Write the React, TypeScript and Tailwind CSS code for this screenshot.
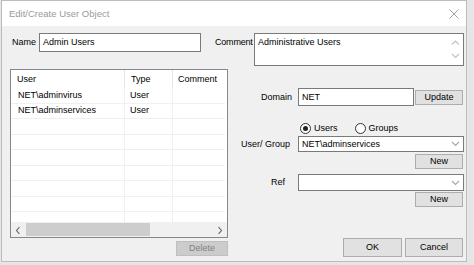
import type { ReactNode } from "react";

const FONT = "font-['Liberation_Sans',Arial,sans-serif]";

const ROWS = [
  { user: "NET\\adminvirus", type: "User", comment: "" },
  { user: "NET\\adminservices", type: "User", comment: "" },
  { user: "", type: "", comment: "" },
  { user: "", type: "", comment: "" },
  { user: "", type: "", comment: "" },
  { user: "", type: "", comment: "" },
  { user: "", type: "", comment: "" },
  { user: "", type: "", comment: "" },
  { user: "", type: "", comment: "" },
];

function Button({
  children,
  className = "",
  disabled = false,
}: {
  children: ReactNode;
  className?: string;
  disabled?: boolean;
}) {
  return (
    <div
      className={`flex items-center justify-center border ${
        disabled
          ? "border-[#bfbfbf] bg-[#cccccc] text-[#838383]"
          : "border-[#adadad] bg-[#e1e1e1] text-black"
      } ${className}`}
    >
      {children}
    </div>
  );
}

function Chevron({ dir = "down", color = "#a6a6a6" }: { dir?: "down" | "up" | "left" | "right"; color?: string }) {
  const d = {
    down: "M1 2 L4.5 5.5 L8 2",
    up: "M1 5.5 L4.5 2 L8 5.5",
    left: "M5.5 1 L2.5 4.5 L5.5 8",
    right: "M3.5 1 L6.5 4.5 L3.5 8",
  }[dir];
  return (
    <svg width="9" height="8" viewBox="0 0 9 8" fill="none">
      <path d={d} stroke={color} strokeWidth="1.1" />
    </svg>
  );
}

function Combo({ value, className = "" }: { value: string; className?: string }) {
  return (
    <div className={`flex items-center justify-between border border-[#7a7a7a] bg-white pl-[3px] pr-[3px] ${className}`}>
      <span>{value}</span>
      <Chevron />
    </div>
  );
}

function Radio({ checked, label }: { checked: boolean; label: string }) {
  return (
    <div className="flex items-center gap-[3px]">
      <span className="flex h-[11px] w-[11px] items-center justify-center rounded-full border border-[#333] bg-white">
        {checked ? <span className="h-[5px] w-[5px] rounded-full bg-[#222]" /> : null}
      </span>
      <span>{label}</span>
    </div>
  );
}

export default function App() {
  return (
    <div className={`h-[265px] w-[474px] overflow-hidden bg-[#e6e6e6] text-[9px] leading-none text-black ${FONT}`}>
      <div className="ml-[1px] flex h-[262px] w-[466px] flex-col border border-[#bcbcbc] bg-[#f0f0f0]">
        <div className="flex h-[25px] items-center justify-between bg-white pl-[7px] pr-[7px] text-[9.5px] text-[#9a9a9a]">
          <span>Edit/Create User Object</span>
          <svg width="10" height="10" viewBox="0 0 10 10">
            <path d="M0.5 0.5 L9.5 9.5 M9.5 0.5 L0.5 9.5" stroke="#999999" strokeWidth="0.9" />
          </svg>
        </div>

        <div className="flex flex-col pl-[8px] pr-[2px]">
          <div className="mt-[7px] flex items-start">
            <span className="ml-[2px] flex h-[19px] w-[27px] items-center">Name</span>
            <div className="flex h-[19px] w-[162px] items-center border border-[#7a7a7a] bg-white pl-[3px]">
              Admin Users
            </div>
            <span className="ml-[14px] flex h-[19px] w-[39px] items-center tracking-[-0.2px]">Comment</span>
            <div className="flex h-[33px] w-[210px] border border-[#7a7a7a] bg-white">
              <div className="flex-1 pl-[3px] pt-[4px]">Administrative Users</div>
              <div className="flex w-[16px] flex-col items-center justify-between py-[5px]">
                <Chevron dir="up" color="#c2c2c2" />
                <Chevron dir="down" color="#c2c2c2" />
              </div>
            </div>
          </div>

          <div className="mt-[3px] flex">
            <div className="flex w-[218px] flex-col">
              <div className="flex h-[169px] flex-col border border-[#828790] bg-white">
                <div className="flex h-[18px] shrink-0">
                  <div className="flex w-[114px] items-center border-r border-[#e5e5e5] pl-[6px]">User</div>
                  <div className="flex w-[48px] items-center border-r border-[#e5e5e5] pl-[6px]">Type</div>
                  <div className="flex w-[53px] items-center pl-[5px]">Comment</div>
                </div>
                <div className="flex-1 overflow-hidden">
                  {ROWS.map((row, i) => (
                    <div key={i} className="flex h-[15.5px] w-[214px] border-b border-[#f0f0f0]">
                      <div className="flex w-[114px] items-center border-r border-[#f0f0f0] pl-[7px]">{row.user}</div>
                      <div className="flex w-[48px] items-center border-r border-[#f0f0f0] pl-[5px]">{row.type}</div>
                      <div className="flex w-[52px] items-center pl-[5px]">{row.comment}</div>
                    </div>
                  ))}
                </div>
                <div className="flex h-[15px] shrink-0 items-center bg-[#f0f0f0]">
                  <div className="flex w-[15px] items-center justify-center">
                    <Chevron dir="left" color="#606060" />
                  </div>
                  <div className="h-[13px] w-[124px] bg-[#cdcdcd]" />
                  <div className="flex-1" />
                  <div className="flex w-[15px] items-center justify-center">
                    <Chevron dir="right" color="#606060" />
                  </div>
                </div>
              </div>
              <Button disabled className="mt-[3px] h-[15px] w-[52px] self-end">
                Delete
              </Button>
            </div>

            <div className="flex flex-1 flex-col">
              <div className="mt-[19px] flex items-start">
                <span className="flex h-[18px] w-[64px] items-center justify-end">Domain</span>
                <div className="ml-[6px] flex h-[18px] w-[116px] items-center border border-[#7a7a7a] bg-white pl-[3px]">
                  NET
                </div>
                <Button className="ml-[1px] mt-[2px] h-[15px] w-[48px]">Update</Button>
              </div>

              <div className="ml-[72px] mt-[16px] flex h-[12px] items-center gap-[17px]">
                <Radio checked label="Users" />
                <Radio checked={false} label="Groups" />
              </div>

              <div className="mt-[2px] flex items-center">
                <span className="flex w-[62px] justify-end">User/ Group</span>
                <Combo value="NET\adminservices" className="ml-[8px] h-[16px] w-[166px]" />
              </div>
              <Button className="mr-[1px] mt-[2px] h-[15px] w-[48px] self-end">New</Button>

              <div className="mt-[5px] flex items-center">
                <span className="flex w-[57px] justify-end">Ref</span>
                <Combo value="" className="ml-[13px] h-[17px] w-[166px]" />
              </div>
              <Button className="mr-[1px] mt-[1px] h-[15px] w-[48px] self-end">New</Button>

              <div className="mr-[1px] mt-[31px] flex justify-end gap-[3px]">
                <Button className="h-[19px] w-[59px]">OK</Button>
                <Button className="h-[19px] w-[58px]">Cancel</Button>
              </div>
            </div>
          </div>
        </div>
      </div>
    </div>
  );
}
